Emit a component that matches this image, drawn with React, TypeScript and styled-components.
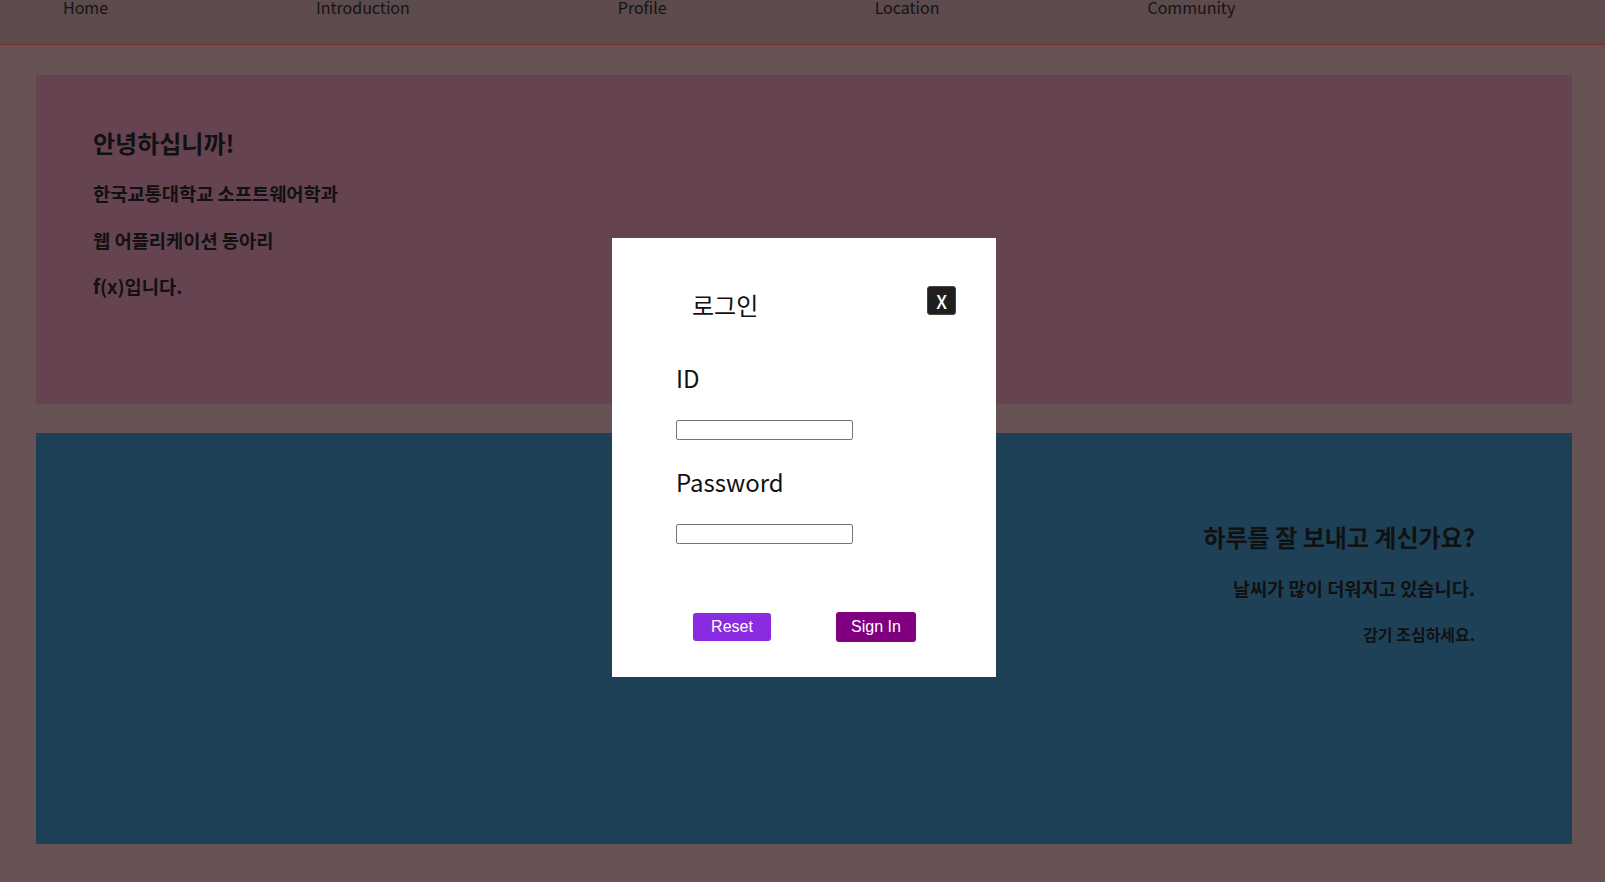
import React from "react";
import styled, { createGlobalStyle } from "styled-components";

const GlobalStyle = createGlobalStyle`
  html, body {
    margin: 0;
    padding: 0;
    background: #675254;
    font-family: "Noto Sans CJK KR", "Noto Sans", sans-serif;
    color: #111;
  }
  * { box-sizing: border-box; }
`;

const Header = styled.header`
  height: 45px;
  background: #5c4a4c;
  border-bottom: 1px solid #73302b;
  overflow: hidden;
`;

const NavList = styled.ul`
  display: flex;
  gap: 208px;
  list-style: none;
  margin: -4px 0 0 0;
  padding: 0 0 0 63px;
`;

const NavItem = styled.li`
  font-size: 16px;
  line-height: 23px;
  color: #141414;
`;

const Main = styled.main`
  display: flex;
  flex-direction: column;
  gap: 29px;
  padding: 30px 33px 38px 36px;
`;

const Section = styled.section<{ $bg: string; $h: number; $align: "left" | "right" }>`
  height: ${(p) => p.$h}px;
  background: ${(p) => p.$bg};
  display: flex;
  flex-direction: column;
  align-items: ${(p) => (p.$align === "left" ? "flex-start" : "flex-end")};
  text-align: ${(p) => p.$align};
`;

const Heading = styled.h2<{ $mt: number }>`
  margin: ${(p) => p.$mt}px 0 0 0;
  font-size: 24px;
  line-height: 32px;
  font-weight: 700;
  color: #111;
`;

const Line = styled.p<{ $size: number; $mt: number }>`
  margin: ${(p) => p.$mt}px 0 0 0;
  font-size: ${(p) => p.$size}px;
  line-height: 26px;
  font-weight: 700;
  color: #111;
`;

const LeftInner = styled.div`
  padding-left: 57px;
  display: flex;
  flex-direction: column;
`;

const RightInner = styled.div`
  padding-right: 97px;
  display: flex;
  flex-direction: column;
  align-items: flex-end;
`;

const Modal = styled.div`
  position: fixed;
  left: 612px;
  top: 238px;
  width: 384px;
  height: 439px;
  background: #ffffff;
  display: flex;
  flex-direction: column;
`;

const ModalHead = styled.div`
  display: flex;
  justify-content: space-between;
  align-items: flex-start;
  margin-top: 48px;
  padding: 0 40px 0 80px;
  height: 34px;
`;

const ModalTitle = styled.h3`
  margin: 3px 0 0 0;
  font-size: 24px;
  line-height: 32px;
  font-weight: 400;
  color: #111;
`;

const CloseButton = styled.button`
  width: 29px;
  height: 29px;
  border: 1px solid #444;
  border-radius: 3px;
  background: #1f1f1f;
  color: #fff;
  font-family: "Noto Sans CJK KR", "Noto Sans", sans-serif;
  font-size: 18px;
  font-weight: 500;
  line-height: 1;
  padding: 0;
  display: flex;
  align-items: center;
  justify-content: center;
`;

const Form = styled.div`
  display: flex;
  flex-direction: column;
  align-items: flex-start;
  padding-left: 64px;
`;

const Label = styled.label<{ $mt: number }>`
  margin-top: ${(p) => p.$mt}px;
  font-size: 24px;
  line-height: 30px;
  color: #111;
`;

const Input = styled.input<{ $mt: number }>`
  margin-top: ${(p) => p.$mt}px;
  width: 177px;
  height: 20px;
  border: 1px solid #767676;
  border-radius: 2px;
  padding: 1px 2px;
  background: #fff;
`;

const ButtonRow = styled.div`
  display: flex;
  align-items: center;
  margin-top: 68px;
  padding-left: 81px;
  gap: 65px;
`;

const ActionButton = styled.button<{ $bg: string; $w: number; $h: number }>`
  width: ${(p) => p.$w}px;
  height: ${(p) => p.$h}px;
  background: ${(p) => p.$bg};
  color: #fff;
  border: none;
  border-radius: 3px;
  font-family: "Liberation Sans", Arial, sans-serif;
  font-size: 16px;
  padding: 0;
`;

export default function App() {
  const nav = ["Home", "Introduction", "Profile", "Location", "Community"];
  return (
    <>
      <GlobalStyle />
      <Header>
        <NavList>
          {nav.map((n) => (
            <NavItem key={n}>{n}</NavItem>
          ))}
        </NavList>
      </Header>
      <Main>
        <Section $bg="#654350" $h={329} $align="left">
          <LeftInner>
            <Heading $mt={52}>안녕하십니까!</Heading>
            <Line $size={18.7} $mt={21}>한국교통대학교 소프트웨어학과</Line>
            <Line $size={18.7} $mt={21}>웹 어플리케이션 동아리</Line>
            <Line $size={18.7} $mt={20}>f(x)입니다.</Line>
          </LeftInner>
        </Section>
        <Section $bg="#1e4158" $h={411} $align="right">
          <RightInner>
            <Heading $mt={88}>하루를 잘 보내고 계신가요?</Heading>
            <Line $size={18.7} $mt={22}>날씨가 많이 더워지고 있습니다.</Line>
            <Line $size={16} $mt={20}>감기 조심하세요.</Line>
          </RightInner>
        </Section>
      </Main>
      <Modal>
        <ModalHead>
          <ModalTitle>로그인</ModalTitle>
          <CloseButton>X</CloseButton>
        </ModalHead>
        <Form>
          <Label $mt={43}>ID</Label>
          <Input $mt={27} type="text" />
          <Label $mt={27}>Password</Label>
          <Input $mt={27} type="password" />
        </Form>
        <ButtonRow>
          <ActionButton $bg="#8a2be2" $w={78} $h={28}>Reset</ActionButton>
          <ActionButton $bg="#800080" $w={80} $h={30}>Sign In</ActionButton>
        </ButtonRow>
      </Modal>
    </>
  );
}
